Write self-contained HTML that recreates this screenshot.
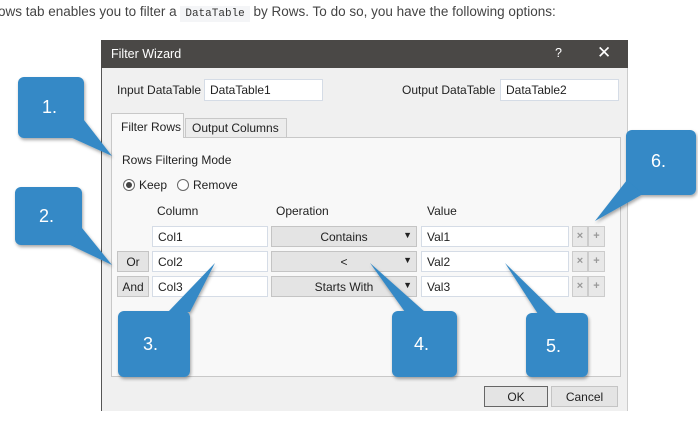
<!DOCTYPE html>
<html><head><meta charset="utf-8"><style>
*{box-sizing:border-box;margin:0;padding:0}
body{width:698px;height:423px;background:#fff;position:relative;overflow:hidden;font-family:"Liberation Sans",sans-serif;font-size:12px;color:#222}
.a{position:absolute}
.top{left:0;top:4px;font-size:13.5px;color:#444;white-space:nowrap;left:-2px}
code{font-family:"Liberation Mono",monospace;font-size:11px;background:#f4f5f7;padding:2px 5px;color:#333}
.dlg{left:101px;top:40px;width:527px;height:371px;background:#f0f0f0;border-left:1px solid #555;border-right:1px solid #ccc}
.title{left:101px;top:40px;width:527px;height:28px;background:#4a4846;color:#fff;font-size:12.5px;padding:7px 10px}
.inp{background:#fff;border:1px solid #d5dce6;padding:3px 5px;font-size:12px}
.btn{background:#e4e4e4;border:1px solid #c4c4c4;text-align:center;font-size:12px}
.xb{background:#e8e8e8;border:1px solid #ccc;color:#999;font-size:11px;font-weight:bold;text-align:center;line-height:19px}
</style></head><body>
<div class="a top">ows tab enables you to filter a <code>DataTable</code> by Rows. To do so, you have the following options:</div>
<div class="a dlg"></div>
<div class="a title">Filter Wizard<span class="a" style="left:454px;top:6px">?</span><span class="a" style="left:496px;top:3px;font-size:17px">✕</span></div>
<div class="a" style="left:117px;top:83px">Input DataTable</div>
<div class="a inp" style="left:204px;top:79px;width:119px;height:22px">DataTable1</div>
<div class="a" style="left:402px;top:83px">Output DataTable</div>
<div class="a inp" style="left:500px;top:79px;width:119px;height:22px">DataTable2</div>
<div class="a" style="left:111px;top:137px;width:510px;height:240px;border:1px solid #c8c8c8;background:#f8f8f8"></div>
<div class="a" style="left:111px;top:113px;width:73px;height:25px;background:#f8f8f8;border:1px solid #c8c8c8;border-bottom:none;padding:6px 0 0 9px">Filter Rows</div>
<div class="a" style="left:185px;top:118px;width:102px;height:19px;background:#ececec;border:1px solid #c8c8c8;border-bottom:none;padding:2px 0 0 6px">Output Columns</div>
<div class="a" style="left:122px;top:153px">Rows Filtering Mode</div>
<div class="a" style="left:123px;top:179px;width:12px;height:12px;border:1px solid #666;border-radius:50%;background:#fff"><div style="margin:2px;width:6px;height:6px;border-radius:50%;background:#444"></div></div>
<div class="a" style="left:139px;top:178px">Keep</div>
<div class="a" style="left:177px;top:179px;width:12px;height:12px;border:1px solid #666;border-radius:50%;background:#fff"></div>
<div class="a" style="left:193px;top:178px">Remove</div>
<div class="a" style="left:157px;top:204px">Column</div>
<div class="a" style="left:276px;top:204px">Operation</div>
<div class="a" style="left:427px;top:204px">Value</div>

<div class="a inp" style="left:152px;top:226px;width:116px;height:21px">Col1</div>
<div class="a btn" style="left:271px;top:226px;width:146px;height:21px;padding-top:3px">Contains<span class="a" style="right:4px;top:3px;font-size:9px">▼</span></div>
<div class="a inp" style="left:421px;top:226px;width:148px;height:21px">Val1</div>
<div class="a xb" style="left:572px;top:226px;width:16px;height:21px">×</div><div class="a xb" style="left:588px;top:226px;width:17px;height:21px">+</div>

<div class="a btn" style="left:117px;top:251px;width:32px;height:21px;padding-top:3px">Or</div>
<div class="a inp" style="left:152px;top:251px;width:116px;height:21px">Col2</div>
<div class="a btn" style="left:271px;top:251px;width:146px;height:21px;padding-top:3px">&lt;<span class="a" style="right:4px;top:3px;font-size:9px">▼</span></div>
<div class="a inp" style="left:421px;top:251px;width:148px;height:21px">Val2</div>
<div class="a xb" style="left:572px;top:251px;width:16px;height:21px">×</div><div class="a xb" style="left:588px;top:251px;width:17px;height:21px">+</div>

<div class="a btn" style="left:117px;top:276px;width:32px;height:21px;padding-top:3px">And</div>
<div class="a inp" style="left:152px;top:276px;width:116px;height:21px">Col3</div>
<div class="a btn" style="left:271px;top:276px;width:146px;height:21px;padding-top:3px">Starts With<span class="a" style="right:4px;top:3px;font-size:9px">▼</span></div>
<div class="a inp" style="left:421px;top:276px;width:148px;height:21px">Val3</div>
<div class="a xb" style="left:572px;top:276px;width:16px;height:21px">×</div><div class="a xb" style="left:588px;top:276px;width:17px;height:21px">+</div>

<div class="a btn" style="left:484px;top:386px;width:64px;height:21px;padding-top:3px;border-color:#666">OK</div>
<div class="a btn" style="left:551px;top:386px;width:67px;height:21px;padding-top:3px">Cancel</div>

<svg class="a" style="left:0;top:0" width="698" height="423">
<defs><filter id="s" x="-20%" y="-20%" width="150%" height="150%"><feDropShadow dx="1" dy="2" stdDeviation="1.5" flood-color="#000" flood-opacity=".35"/></filter></defs>
<g fill="#3489c6" filter="url(#s)">
<rect x="18" y="77" width="66" height="61" rx="6"/><polygon points="70,137 84,120 112,156"/>
<rect x="15" y="187" width="67" height="58" rx="6"/><polygon points="68,244 82,228 112,265"/>
<rect x="118" y="311" width="72" height="66" rx="6"/><polygon points="168,312 190,312 215,263"/>
<rect x="392" y="311" width="65" height="66" rx="6"/><polygon points="405,312 425,312 370,263"/>
<rect x="526" y="313" width="62" height="64" rx="6"/><polygon points="538,314 557,314 505,263"/>
<rect x="626" y="130" width="70" height="65" rx="6"/><polygon points="627,180 643,194 595,221"/>
</g>
<g fill="#fff" font-family="Liberation Sans" font-size="18">
<text x="42" y="113">1.</text><text x="39" y="222">2.</text><text x="143" y="350">3.</text>
<text x="414" y="350">4.</text><text x="546" y="352">5.</text><text x="651" y="167">6.</text>
</g>
</svg>
</body></html>
